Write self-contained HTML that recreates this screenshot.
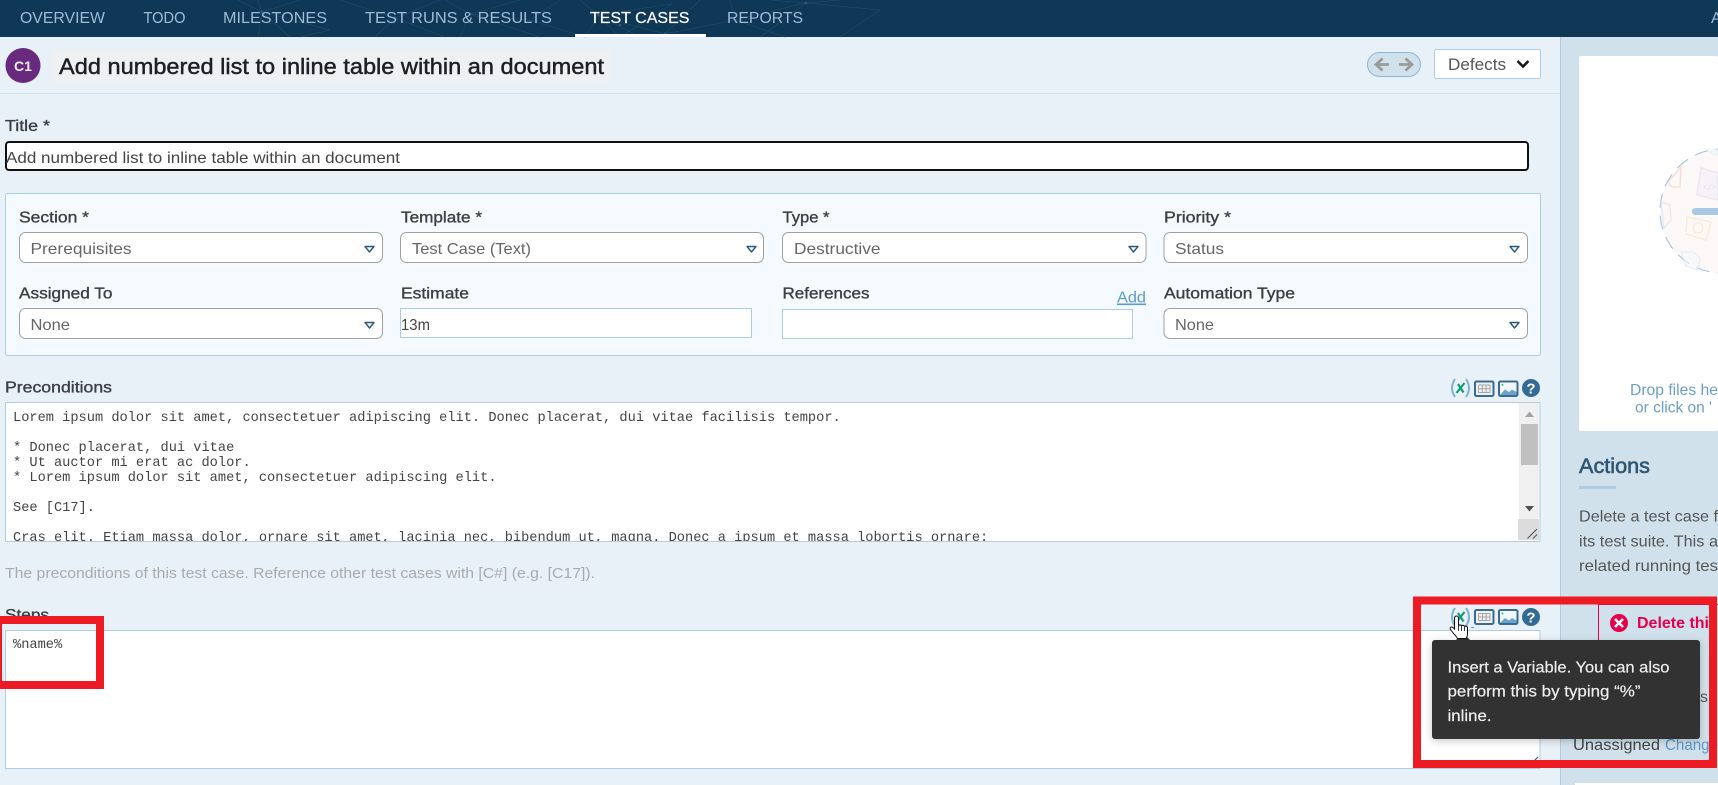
<!DOCTYPE html>
<html lang="en">
<head>
<meta charset="utf-8">
<title>Add numbered list to inline table within an document</title>
<style>
html,body{margin:0;padding:0;width:1718px;height:785px;overflow:hidden;background:#e9f1f8}
svg{display:block}
text{font-family:"Liberation Sans",sans-serif;white-space:pre}
.nav{font-size:16px;fill:#9cbdd5}
.lab{font-size:15.5px;fill:#3a3f44;stroke:#3a3f44;stroke-width:.35}
.val{font-size:16px;fill:#666}
.req{fill:#777;stroke:none}
.mono{font-family:"Liberation Mono",monospace;font-size:13.67px;fill:#444}
.side{font-size:16px;fill:#555}
.tip{font-size:16px;fill:#eee;stroke:#eee;stroke-width:.2}
.link{fill:#5b96c5}
.box{fill:#fff;stroke:#aecde2;stroke-width:1}
.sel{fill:#fff;stroke:#a0a0a0;stroke-width:1}
.arr{fill:#f4f8fb;stroke:#2c5a7d;stroke-width:1.4;stroke-linejoin:round}
</style>
</head>
<body>
<svg xmlns="http://www.w3.org/2000/svg" width="1718" height="785" viewBox="0 0 1718 785">
<defs>
<clipPath id="ta"><rect x="6" y="403" width="1513" height="138"/></clipPath>
<filter id="sh" x="-10%" y="-10%" width="120%" height="130%"><feDropShadow dx="0" dy="2" stdDeviation="4" flood-color="#000" flood-opacity=".22"/></filter>
</defs>

<!-- backgrounds -->
<rect width="1718" height="785" fill="#e9f1f8"/>
<rect x="1560" y="37" width="158" height="748" fill="#d1e1ec"/>
<rect x="1560" y="37" width="1" height="748" fill="#aecde2"/>

<!-- top nav -->
<rect width="1718" height="37" fill="#0f3756"/>
<g stroke="#24506f" stroke-width=".7" fill="none" opacity=".75">
<path d="M238 0L262 12L300 0M262 12L258 37M258 0L262 12L290 37M262 12L330 30L300 37"/>
<path d="M340 0L395 18L375 37M395 18L445 37M395 18L440 0M460 37L470 14L445 0"/>
<path d="M470 14L520 0M470 14L540 37M470 14L530 20L585 37L598 15L640 37M530 20L560 0"/>
<path d="M598 15L620 37M598 15L580 0M598 15L672 4L620 37M620 22L665 34L735 20L730 0M665 34L700 0"/>
<path d="M735 20L806 3L760 37M735 20L785 37M806 3L770 0M806 3L840 0M806 3L880 10L840 37"/>
</g>
<g fill="#2b5878"><circle cx="262" cy="12" r="1.5"/><circle cx="395" cy="18" r="1.5"/><circle cx="470" cy="14" r="1.5"/><circle cx="598" cy="15" r="1.5"/><circle cx="620" cy="25" r="1.5"/><circle cx="665" cy="34" r="1.5"/><circle cx="806" cy="3" r="1.5"/></g>
<text class="nav" x="20" y="23" textLength="85" lengthAdjust="spacingAndGlyphs">OVERVIEW</text>
<text class="nav" x="143.5" y="23" textLength="42" lengthAdjust="spacingAndGlyphs">TODO</text>
<text class="nav" x="223" y="23" textLength="104" lengthAdjust="spacingAndGlyphs">MILESTONES</text>
<text class="nav" x="365" y="23" textLength="187" lengthAdjust="spacingAndGlyphs">TEST RUNS &amp; RESULTS</text>
<text class="nav" x="590" y="23" textLength="99.5" lengthAdjust="spacingAndGlyphs" style="fill:#fff;stroke:#fff;stroke-width:.2">TEST CASES</text>
<text class="nav" x="727" y="23" textLength="76" lengthAdjust="spacingAndGlyphs">REPORTS</text>
<text class="nav" x="1711" y="23">A</text>
<rect x="575" y="34" width="131" height="3" fill="#fff"/>

<!-- header -->
<rect x="52" y="50" width="559" height="32" fill="#eef0f2"/>
<circle cx="23" cy="65.5" r="17.5" fill="#672a7f"/>
<text x="23" y="71" text-anchor="middle" style="font-size:14px;font-weight:700;fill:#eee">C1</text>
<text x="59" y="74" textLength="545" lengthAdjust="spacingAndGlyphs" style="font-size:22px;fill:#1c2024;stroke:#1c2024;stroke-width:.45">Add numbered list to inline table within an document</text>
<rect x="0" y="93" width="1560" height="1" fill="#d2e1eb"/>

<rect x="1367.5" y="52.5" width="53" height="24" rx="12" fill="#d1e1ec" stroke="#8ab8d8"/>
<path d="M1389 64.5H1376.500M1382.500 58.500L1376 64.500L1382.500 70.500" fill="none" stroke="#9a9a9a" stroke-width="2.800"/>
<path d="M1399 64.500H1411.500M1405.500 58.500L1412 64.500L1405.500 70.500" fill="none" stroke="#9a9a9a" stroke-width="2.800"/>
<rect x="1434.5" y="49.5" width="106" height="29" rx="2" fill="#fff" stroke="#aecde2"/>
<text x="1448" y="70" textLength="58" lengthAdjust="spacingAndGlyphs" style="font-size:16.5px;fill:#555">Defects</text>
<path d="M1517.5 61L1523 66.5L1528.5 61" fill="none" stroke="#1a1a1a" stroke-width="2.6"/>

<!-- title -->
<text class="lab" x="5" y="131" textLength="45" lengthAdjust="spacingAndGlyphs">Title *</text>
<rect x="6" y="142" width="1522" height="28" rx="3" fill="#fff" stroke="#111" stroke-width="2"/>
<text class="val" x="6" y="163" textLength="394" lengthAdjust="spacingAndGlyphs" style="fill:#444">Add numbered list to inline table within an document</text>

<!-- form box -->
<rect x="5.5" y="193.5" width="1535" height="162" rx="2" fill="#f5fafe" stroke="#aecde2"/>
<text class="lab" x="19" y="222.5" textLength="70" lengthAdjust="spacingAndGlyphs">Section *</text>
<text class="lab" x="401" y="222.5" textLength="81" lengthAdjust="spacingAndGlyphs">Template *</text>
<text class="lab" x="782.5" y="222.5" textLength="47" lengthAdjust="spacingAndGlyphs">Type *</text>
<text class="lab" x="1164" y="222.5" textLength="67" lengthAdjust="spacingAndGlyphs">Priority *</text>

<rect class="sel" x="19.5" y="232.5" width="363" height="30" rx="6"/>
<rect class="sel" x="400.5" y="232.5" width="363" height="30" rx="6"/>
<rect class="sel" x="782.5" y="232.5" width="363.5" height="30" rx="6"/>
<rect class="sel" x="1164" y="232.5" width="363.5" height="30" rx="6"/>
<text class="val" x="30.5" y="254" textLength="101" lengthAdjust="spacingAndGlyphs">Prerequisites</text>
<text class="val" x="412" y="254" textLength="119" lengthAdjust="spacingAndGlyphs">Test Case (Text)</text>
<text class="val" x="794" y="254" textLength="86.5" lengthAdjust="spacingAndGlyphs">Destructive</text>
<text class="val" x="1175" y="254" textLength="49" lengthAdjust="spacingAndGlyphs">Status</text>
<path class="arr" d="M365 246.5H374L369.5 252Z"/>
<path class="arr" d="M747 246.5H756L751.5 252Z"/>
<path class="arr" d="M1129 246.5H1138L1133.5 252Z"/>
<path class="arr" d="M1510 246.5H1519L1514.5 252Z"/>

<text class="lab" x="19" y="298.5" textLength="93.5" lengthAdjust="spacingAndGlyphs">Assigned To</text>
<text class="lab" x="401" y="298.5" textLength="68" lengthAdjust="spacingAndGlyphs">Estimate</text>
<text class="lab" x="782.5" y="298.5" textLength="87" lengthAdjust="spacingAndGlyphs">References</text>
<text class="lab" x="1164" y="298.5" textLength="131" lengthAdjust="spacingAndGlyphs">Automation Type</text>
<text x="1117" y="302.5" textLength="29" lengthAdjust="spacingAndGlyphs" style="font-size:16px;fill:#5b9bc8;text-decoration:underline">Add</text>

<rect class="sel" x="19.5" y="308.5" width="363" height="30" rx="6"/>
<rect class="box" x="400.5" y="308.5" width="351" height="29"/>
<rect class="box" x="782.5" y="309.5" width="350" height="29"/>
<rect class="sel" x="1164" y="308.5" width="363.5" height="30" rx="6"/>
<text class="val" x="30.5" y="330" textLength="39.5" lengthAdjust="spacingAndGlyphs">None</text>
<text class="val" x="401" y="330" textLength="29" lengthAdjust="spacingAndGlyphs" style="fill:#444">13m</text>
<text class="val" x="1175" y="330" textLength="39" lengthAdjust="spacingAndGlyphs">None</text>
<path class="arr" d="M365 322.5H374L369.5 328Z"/>
<path class="arr" d="M1510 322.5H1519L1514.5 328Z"/>

<!-- preconditions -->
<text class="lab" x="5" y="392.5" textLength="107" lengthAdjust="spacingAndGlyphs">Preconditions</text>
<g>
<path d="M1455 379Q1449 388 1455 397M1466 379Q1472 388 1466 397" fill="none" stroke="#7fb1d3" stroke-width="2"/>
<path d="M1456.5 393L1464.5 383M1458 384L1463.5 392.5" fill="none" stroke="#0f9d76" stroke-width="2.2"/>
<rect x="1475" y="381.5" width="18.5" height="14.5" rx="1.5" fill="#eef1f3" stroke="#3b6a8f" stroke-width="2"/>
<path d="M1478.5 385H1490M1478.5 388.7H1490M1478.5 392.5H1490M1478.5 385V392.5M1482.3 385V392.5M1486.1 385V392.5M1490 385V392.5" stroke="#a5a5a5" stroke-width="1" fill="none"/>
<rect x="1499" y="381.5" width="18.5" height="14.5" rx="1.5" fill="#f2f7fb" stroke="#3b6a8f" stroke-width="2"/>
<path d="M1500 395L1505 389.5L1509 392L1512 389.5L1516.5 392V395Z" fill="#6aa3cf"/>
<circle cx="1502.5" cy="385" r="1" fill="#3fbf8a"/>
<circle cx="1531" cy="388" r="9" fill="#336b93"/>
<text x="1531" y="393.5" text-anchor="middle" style="font-size:15px;font-weight:700;fill:#fff">?</text>
</g>

<rect class="box" x="5.5" y="402.5" width="1534.5" height="139"/>
<g clip-path="url(#ta)">
<text class="mono" x="13" y="421">Lorem ipsum dolor sit amet, consectetuer adipiscing elit. Donec placerat, dui vitae facilisis tempor.</text>
<text class="mono" x="13" y="451">* Donec placerat, dui vitae</text>
<text class="mono" x="13" y="466">* Ut auctor mi erat ac dolor.</text>
<text class="mono" x="13" y="481">* Lorem ipsum dolor sit amet, consectetuer adipiscing elit.</text>
<text class="mono" x="13" y="511">See [C17].</text>
<text class="mono" x="13" y="541">Cras elit. Etiam massa dolor, ornare sit amet, lacinia nec, bibendum ut, magna. Donec a ipsum et massa lobortis ornare:</text>
</g>
<rect x="1519" y="403" width="20" height="116" fill="#f0f0f0"/>
<rect x="1521" y="424" width="17" height="41" fill="#c0c0c0"/>
<path d="M1525 417H1534L1529.5 411.5Z" fill="#a3a3a3"/>
<path d="M1525 506H1534L1529.5 511.5Z" fill="#505050"/>
<rect x="1518" y="519" width="21" height="21" fill="#dcdcdc"/>
<path d="M1527.5 538.5L1537 529M1533 538.5L1537 534.5" stroke="#555" stroke-width="1.1"/>

<text x="5" y="578" textLength="590" lengthAdjust="spacingAndGlyphs" style="font-size:15px;fill:#a8abae">The preconditions of this test case. Reference other test cases with [C#] (e.g. [C17]).</text>

<!-- steps -->
<text class="lab" x="5" y="620" textLength="44" lengthAdjust="spacingAndGlyphs">Steps</text>
<g>
<path d="M1455 608Q1449 617 1455 626M1466 608Q1472 617 1466 626" fill="none" stroke="#7fb1d3" stroke-width="2"/>
<path d="M1456.5 622L1464.5 612M1458 613L1463.5 621.5" fill="none" stroke="#0f9d76" stroke-width="2.2"/>
<rect x="1475" y="610" width="18.5" height="14" rx="1.5" fill="#eef1f3" stroke="#3b6a8f" stroke-width="2"/>
<path d="M1478.5 613.5H1490M1478.5 617H1490M1478.5 620.5H1490M1478.5 613.5V620.5M1482.3 613.5V620.5M1486.1 613.5V620.5M1490 613.5V620.5" stroke="#a5a5a5" stroke-width="1" fill="none"/>
<rect x="1499" y="610" width="18.5" height="14" rx="1.5" fill="#f2f7fb" stroke="#3b6a8f" stroke-width="2"/>
<path d="M1500 623L1505 618L1509 620.5L1512 618L1516.5 620.5V623Z" fill="#6aa3cf"/>
<circle cx="1502.5" cy="613.5" r="1" fill="#3fbf8a"/>
<circle cx="1531" cy="617" r="9" fill="#336b93"/>
<text x="1531" y="622.5" text-anchor="middle" style="font-size:15px;font-weight:700;fill:#fff">?</text>
<rect x="1471" y="627" width="3" height="1" fill="#5b96c5"/>
</g>
<rect class="box" x="5.5" y="630.5" width="1534.5" height="138"/>
<text class="mono" x="13" y="648">%name%</text>
<path d="M1533 762L1538 757" stroke="#555" stroke-width="1.2"/>

<!-- sidebar -->
<rect x="1579" y="56" width="139" height="375" rx="2" fill="#fff"/>
<circle cx="1722" cy="211" r="62" fill="#fdf8f8" stroke="#a9c8e3" stroke-width="1.2" stroke-dasharray="14 8"/>
<g opacity=".55">
<path d="M1668 182L1681 167L1680 187L1672 187Z" fill="none" stroke="#f4c9b4" stroke-width="1.5"/>
<path d="M1701 168L1718 173V200L1697 195Z" fill="#f2f0f8" stroke="#dcd8ec" stroke-width="1.5"/>
<text x="1703" y="190" style="font-size:9px;fill:#cfcbe0">&lt;/&gt;</text>
<path d="M1687 217L1711 222L1706 240L1686 234Z" fill="none" stroke="#f5e3bf" stroke-width="1.5"/>
<circle cx="1698" cy="228" r="5" fill="none" stroke="#f3dfb4" stroke-width="1.2"/>
<path d="M1661 202L1670 205L1671 220L1664 228Z" fill="none" stroke="#d7dfea" stroke-width="1.5"/>
<path d="M1681 252L1694 252L1700 258L1698 270L1686 266Z" fill="#f3f9fd" stroke="#cfe3f0" stroke-width="1.2"/>
<path d="M1709 152Q1718 148 1718 148V155Q1712 155 1709 152Z" fill="#eaf7f5" stroke="#cfeae6"/>
</g>
<rect x="1692" y="208" width="30" height="7" rx="3.5" fill="#a9c8e3"/>
<text x="1630" y="395" textLength="88" lengthAdjust="spacingAndGlyphs" style="font-size:16px;fill:#6a9fc7">Drop files he</text>
<text x="1635" y="412.5" textLength="77" lengthAdjust="spacingAndGlyphs" style="font-size:16px;fill:#6a9fc7">or click on '</text>

<text x="1579" y="473" textLength="71" lengthAdjust="spacingAndGlyphs" style="font-size:21px;fill:#2e5675;stroke:#2e5675;stroke-width:.6">Actions</text>
<rect x="1579" y="486" width="37" height="3" fill="#aecde2"/>
<text class="side" x="1579" y="521.5" textLength="139" lengthAdjust="spacingAndGlyphs">Delete a test case f</text>
<text class="side" x="1579" y="546.5" textLength="139" lengthAdjust="spacingAndGlyphs">its test suite. This a</text>
<text class="side" x="1579" y="571" textLength="139" lengthAdjust="spacingAndGlyphs">related running tes</text>

<!-- delete button -->
<path d="M1718 604.5H1598.5V642" fill="none" stroke="#e4004b"/>
<circle cx="1619" cy="623" r="9" fill="#e4004b"/>
<path d="M1615 619L1623 627M1623 619L1615 627" stroke="#fff" stroke-width="2.6"/>
<text x="1637" y="628" textLength="72" lengthAdjust="spacingAndGlyphs" style="font-size:16px;font-weight:700;fill:#e4004b">Delete thi</text>

<text x="1700" y="702" style="font-size:16px;fill:#555">s</text>
<text class="side" x="1573" y="750" textLength="87" lengthAdjust="spacingAndGlyphs" style="fill:#444">Unassigned</text>
<text class="side link" x="1665" y="750" textLength="53" lengthAdjust="spacingAndGlyphs">Change</text>
<rect x="1575" y="783" width="143" height="2" fill="#fff"/>

<!-- tooltip -->
<path d="M1456 640L1463 633L1470 640Z" fill="#303030"/>
<rect x="1432" y="640" width="268" height="99" rx="3" fill="#303030" filter="url(#sh)"/>
<text class="tip" x="1447.5" y="672.5" textLength="222" lengthAdjust="spacingAndGlyphs">Insert a Variable. You can also</text>
<text class="tip" x="1447.5" y="696.5" textLength="193" lengthAdjust="spacingAndGlyphs">perform this by typing “%”</text>
<text class="tip" x="1447.5" y="721" textLength="44" lengthAdjust="spacingAndGlyphs">inline.</text>

<!-- cursor -->
<path d="M1454.5 618.5q0-2.5 2-2.5q2 0 2 2.5v7q2-1.2 3 .2q2-1 3 .6q2-.8 3 1v6.7q0 2.5-1.5 4.5h-8.5q-1.5-2.5-3.5-4.5l-3.5-4.5q-1-2 .8-2.5q1.2-.2 3.2 2z" fill="#fff" stroke="#111" stroke-width="1"/>
<path d="M1458.5 626v5M1461.5 626v5M1464.5 626.5v4.5" stroke="#111" stroke-width=".8" fill="none"/>

<!-- annotation boxes -->
<rect x="-2" y="620" width="102" height="65" fill="none" stroke="#ed1c24" stroke-width="8"/>
<rect x="1417" y="600.5" width="296" height="163.5" fill="none" stroke="#ed1c24" stroke-width="8"/>
</svg>
</body>
</html>
